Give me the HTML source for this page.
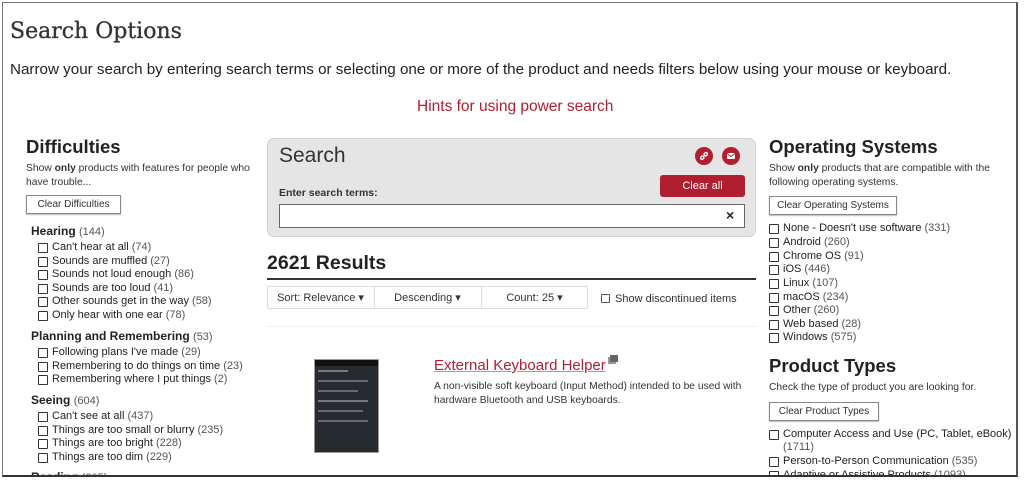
<!DOCTYPE html>
<html><head><meta charset="utf-8"><style>
*{box-sizing:border-box;margin:0;padding:0}
body{width:1024px;height:481px;overflow:hidden;background:#fff;font-family:"Liberation Sans",sans-serif;color:#333;position:relative}
.frame{position:absolute;left:2px;top:2px;width:1016px;height:475px;border:1px solid #777;border-right:2px solid #555;border-bottom:2px solid #333;overflow:hidden}
.a{position:absolute;white-space:nowrap}
.h1{font-family:"DejaVu Serif","Liberation Serif",serif;font-size:22px;left:7px;top:16px;color:#333;-webkit-text-stroke:0.3px #333}
.sub{font-size:15.2px;left:7px;top:58px;color:#222}
.hint{left:414px;top:95px;font-size:15.5px;color:#b01e2f}
.h2{font-size:18.5px;font-weight:bold;color:#222}
.sm{font-size:10.3px;color:#333;line-height:14px}
.btn{position:absolute;border:1px solid #888;background:#fff;font-size:10px;text-align:center;color:#333;box-shadow:0 1px 1px #bbb}
.grp{font-size:12px;font-weight:bold;color:#222}
.grp span{font-weight:normal;color:#555;font-size:11px}
.it{font-size:11px;color:#222;padding-left:14px;position:absolute;white-space:nowrap;line-height:13px}
.it:before{content:"";position:absolute;left:0;top:2px;width:8px;height:8px;border:1px solid #333;border-radius:1px}
.it span{color:#555}
.circ{position:absolute;width:18px;height:18px;border-radius:50%;background:#b01e2f}
</style></head><body><div class="frame">
<div class="a h1">Search Options</div>
<div class="a sub">Narrow your search by entering search terms or selecting one or more of the product and needs filters below using your mouse or keyboard.</div>
<div class="a hint">Hints for using power search</div>

<div class="a h2" style="left:23px;top:133px">Difficulties</div>
<div class="a sm" style="left:23px;top:159px">Show <b>only</b> products with features for people who<br>have trouble...</div>
<div class="btn" style="left:23px;top:192px;width:95px;height:19px;line-height:17px">Clear Difficulties</div>
<div class="a grp" style="left:28px;top:221px">Hearing <span>(144)</span></div>
<div class="it" style="left:35px;top:238px">Can't hear at all <span>(74)</span></div>
<div class="it" style="left:35px;top:252px">Sounds are muffled <span>(27)</span></div>
<div class="it" style="left:35px;top:265px">Sounds not loud enough <span>(86)</span></div>
<div class="it" style="left:35px;top:279px">Sounds are too loud <span>(41)</span></div>
<div class="it" style="left:35px;top:292px">Other sounds get in the way <span>(58)</span></div>
<div class="it" style="left:35px;top:306px">Only hear with one ear <span>(78)</span></div>
<div class="a grp" style="left:28px;top:326px">Planning and Remembering <span>(53)</span></div>
<div class="it" style="left:35px;top:343px">Following plans I've made <span>(29)</span></div>
<div class="it" style="left:35px;top:357px">Remembering to do things on time <span>(23)</span></div>
<div class="it" style="left:35px;top:370px">Remembering where I put things <span>(2)</span></div>
<div class="a grp" style="left:28px;top:390px">Seeing <span>(604)</span></div>
<div class="it" style="left:35px;top:407px">Can't see at all <span>(437)</span></div>
<div class="it" style="left:35px;top:421px">Things are too small or blurry <span>(235)</span></div>
<div class="it" style="left:35px;top:434px">Things are too bright <span>(228)</span></div>
<div class="it" style="left:35px;top:448px">Things are too dim <span>(229)</span></div>
<div class="a grp" style="left:28px;top:467px">Reading <span>(305)</span></div>

<div class="a" style="left:264px;top:135px;width:489px;height:99px;background:#e5e5e5;border:1px solid #d2d2d2;border-radius:7px"></div>
<div class="a" style="left:276px;top:141px;font-size:21px;color:#333">Search</div>
<div class="circ" style="left:692px;top:144px"><svg width="18" height="18" viewBox="0 0 18 18"><path d="M8 10l2-2M7.5 8.5l-1.5 1.5a1.4 1.4 0 0 0 2 2l1.5-1.5M10.5 9.5l1.5-1.5a1.4 1.4 0 0 0-2-2L8.5 7.5" stroke="#fff" stroke-width="1.4" fill="none"/></svg></div>
<div class="circ" style="left:719px;top:144px"><svg width="18" height="18" viewBox="0 0 18 18"><rect x="5" y="6" width="8" height="6" rx="1" fill="#fff"/><path d="M5 6.5l4 3 4-3" stroke="#b01e2f" stroke-width="1" fill="none"/></svg></div>
<div class="a" style="left:657px;top:172px;width:85px;height:22px;background:#b01e2f;border-radius:3px;color:#fff;font-size:11px;text-align:center;line-height:22px">Clear all</div>
<div class="a" style="left:276px;top:184px;font-size:10.5px;font-weight:bold;color:#333">Enter search terms:</div>
<div class="a" style="left:276px;top:201px;width:466px;height:24px;background:#fff;border:1px solid #666"></div>
<div class="a" style="left:723px;top:204px;font-size:14px;font-weight:bold;color:#222">×</div>

<div class="a" style="left:264px;top:249px;font-size:19.5px;font-weight:bold;color:#222">2621 Results</div>
<div class="a" style="left:264px;top:275px;width:489px;height:2px;background:#333"></div>
<div class="a" style="left:264px;top:283px;width:321px;height:23px;border:1px solid #ddd;border-radius:2px;background:#fff"></div>
<div class="a" style="left:371px;top:283px;width:1px;height:23px;background:#ddd"></div>
<div class="a" style="left:478px;top:283px;width:1px;height:23px;background:#ddd"></div>
<div class="a" style="left:264px;top:288px;width:107px;text-align:center;font-size:11px">Sort: Relevance ▾</div>
<div class="a" style="left:371px;top:288px;width:107px;text-align:center;font-size:11px">Descending ▾</div>
<div class="a" style="left:478px;top:288px;width:107px;text-align:center;font-size:11px">Count: 25 ▾</div>
<div class="a" style="left:598px;top:291px;width:9px;height:9px;border:1px solid #555;border-radius:1px"></div>
<div class="a" style="left:612px;top:290px;font-size:11px">Show discontinued items</div>
<div class="a" style="left:264px;top:323px;width:489px;height:1px;background:#eee"></div>

<div class="a" style="left:311px;top:356px;width:65px;height:94px;background:#262b30;border:1px solid #999">
<div style="height:6px;background:#111"></div>
<div style="margin:4px 3px;height:2px;background:#778;width:30px"></div>
<div style="margin:8px 3px;height:2px;background:#667;width:50px"></div>
<div style="margin:8px 3px;height:2px;background:#667;width:40px"></div>
<div style="margin:8px 3px;height:2px;background:#778;width:50px"></div>
<div style="margin:8px 3px;height:2px;background:#667;width:45px"></div>
<div style="margin:8px 3px;height:2px;background:#667;width:50px"></div>
</div>
<div class="a" style="left:431px;top:352px;font-size:15px;color:#b01e2f;text-decoration:underline;text-decoration-color:#d88">External Keyboard Helper<span style="display:inline-block;width:8px;height:7px;background:#666;box-shadow:-2px 2px 0 #999;margin-left:4px;vertical-align:8px"></span></div>
<div class="a sm" style="left:431px;top:377px">A non-visible soft keyboard (Input Method) intended to be used with<br>hardware Bluetooth and USB keyboards.</div>

<div class="a h2" style="left:766px;top:133px">Operating Systems</div>
<div class="a sm" style="left:766px;top:159px">Show <b>only</b> products that are compatible with the<br>following operating systems.</div>
<div class="btn" style="left:766px;top:193px;width:128px;height:19px;line-height:17px">Clear Operating Systems</div>
<div class="it" style="left:766px;top:219px">None - Doesn't use software <span>(331)</span></div>
<div class="it" style="left:766px;top:233px">Android <span>(260)</span></div>
<div class="it" style="left:766px;top:247px">Chrome OS <span>(91)</span></div>
<div class="it" style="left:766px;top:260px">iOS <span>(446)</span></div>
<div class="it" style="left:766px;top:274px">Linux <span>(107)</span></div>
<div class="it" style="left:766px;top:288px">macOS <span>(234)</span></div>
<div class="it" style="left:766px;top:301px">Other <span>(260)</span></div>
<div class="it" style="left:766px;top:315px">Web based <span>(28)</span></div>
<div class="it" style="left:766px;top:328px">Windows <span>(575)</span></div>
<div class="a h2" style="left:766px;top:352px">Product Types</div>
<div class="a sm" style="left:766px;top:378px">Check the type of product you are looking for.</div>
<div class="btn" style="left:766px;top:399px;width:110px;height:19px;line-height:17px">Clear Product Types</div>
<div class="it" style="left:766px;top:425px">Computer Access and Use (PC, Tablet, eBook)<br><span>(1711)</span></div>
<div class="it" style="left:766px;top:452px">Person-to-Person Communication <span>(535)</span></div>
<div class="it" style="left:766px;top:466px">Adaptive or Assistive Products <span>(1093)</span></div>
</div></body></html>
